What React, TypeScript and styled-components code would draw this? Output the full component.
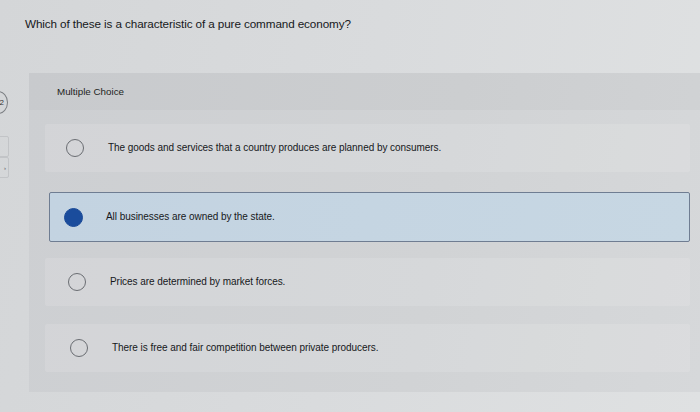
import React from "react";
import styled, { createGlobalStyle } from "styled-components";

const Global = createGlobalStyle`
  html, body { margin: 0; padding: 0; }
  body {
    width: 700px;
    height: 412px;
    overflow: hidden;
    background: linear-gradient(100deg, #d4d6d8 0%, #d9dbdd 50%, #dfe1e2 100%);
    font-family: "Liberation Sans", Arial, sans-serif;
    color: #1f2124;
  }
`;

const Page = styled.div`
  position: relative;
  width: 700px;
  height: 412px;
  display: flex;
  flex-direction: column;
`;

const Question = styled.h1`
  margin: 16px 0 0 25px;
  font-size: 11.7px;
  line-height: 16px;
  font-weight: 400;
  color: #16181b;
  letter-spacing: -0.1px;
`;

const Panel = styled.section`
  margin: 41px 0 0 29px;
  height: 319px;
  background: linear-gradient(100deg, #cdcfd2 0%, #d1d3d5 60%, #d6d8da 100%);
  display: flex;
  flex-direction: column;
`;

const Header = styled.div`
  height: 37px;
  padding: 13px 0 0 28px;
  box-sizing: border-box;
  font-size: 9.8px;
  line-height: 12px;
  color: #1d1f22;
  background: rgba(0, 0, 0, 0.02);
`;

const Options = styled.div`
  display: flex;
  flex-direction: column;
  gap: 18px;
  padding: 14px 10px 0 16px;
`;

const Option = styled.div<{ $selected?: boolean; $shift?: number }>`
  height: 48px;
  box-sizing: border-box;
  display: flex;
  align-items: center;
  padding-left: ${(p) => (p.$selected ? 14 : 20 + (p.$shift || 0))}px;
  border-radius: 2px;
  background: ${(p) => (p.$selected ? "linear-gradient(100deg, #c3d3e1, #c7d7e3)" : "rgba(255,255,255,0.12)")};
  border: 1px solid ${(p) => (p.$selected ? "#6f7d92" : "transparent")};
  margin-left: ${(p) => (p.$selected ? 4 : 0)}px;
  ${(p) => (p.$selected ? "height: 50px; margin-top: 2px; margin-bottom: -2px;" : "")}
`;

const Radio = styled.span<{ $checked?: boolean }>`
  width: ${(p) => (p.$checked ? 19 : 18)}px;
  height: ${(p) => (p.$checked ? 19 : 18)}px;
  border-radius: 50%;
  box-sizing: border-box;
  flex: none;
  border: 1.4px solid ${(p) => (p.$checked ? "#1a4a98" : "#6a6d72")};
  background: ${(p) => (p.$checked ? "#1a4c9c" : "transparent")};
`;

const Label = styled.span<{ $checked?: boolean }>`
  margin-left: ${(p) => (p.$checked ? 23 : 24)}px;
  font-size: 10px;
  line-height: 12px;
  color: #16181b;
  letter-spacing: -0.05px;
`;

const SideButton = styled.div`
  position: absolute;
  left: -12px;
  top: 91px;
  width: 20px;
  height: 23px;
  border-radius: 50%;
  border: 1px solid #7c7f83;
  box-sizing: border-box;
  font-size: 8px;
  line-height: 21px;
  text-align: right;
  padding-right: 3px;
  color: #333;
`;

const SideTabs = styled.div`
  position: absolute;
  left: -6px;
  top: 136px;
  width: 15px;
  display: flex;
  flex-direction: column;
`;

const SideTab = styled.div`
  height: 21px;
  border: 1px solid #c2c4c7;
  border-radius: 2px;
  box-sizing: border-box;
  font-size: 6px;
  line-height: 20px;
  text-align: right;
  padding-right: 2px;
  color: #555;
`;

const options = [
  { text: "The goods and services that a country produces are planned by consumers.", shift: 0 },
  { text: "All businesses are owned by the state.", selected: true, shift: 0 },
  { text: "Prices are determined by market forces.", shift: 2 },
  { text: "There is free and fair competition between private producers.", shift: 4 },
];

export default function App() {
  return (
    <Page>
      <Global />
      <SideButton>2</SideButton>
      <SideTabs>
        <SideTab />
        <SideTab>›</SideTab>
      </SideTabs>
      <Question>Which of these is a characteristic of a pure command economy?</Question>
      <Panel>
        <Header>Multiple Choice</Header>
        <Options>
          {options.map((o, i) => (
            <Option key={i} $selected={o.selected} $shift={o.shift}>
              <Radio $checked={o.selected} />
              <Label $checked={o.selected}>{o.text}</Label>
            </Option>
          ))}
        </Options>
      </Panel>
    </Page>
  );
}
